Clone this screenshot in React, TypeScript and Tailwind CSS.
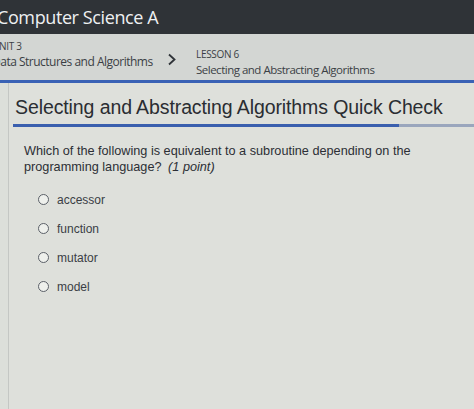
export default function App() {
  const options = ["accessor", "function", "mutator", "model"];

  return (
    <div className="w-[474px] h-[409px] overflow-hidden bg-[#dcdfda] flex flex-col">
      {/* Course header */}
      <div className="h-[34px] shrink-0 bg-[#2f3337] flex items-center">
        <h1 className="-ml-[3px] text-[18px] leading-none text-[#eef0f2] font-['Open_Sans',sans-serif] tracking-[-0.4px]">
          Computer Science A
        </h1>
      </div>

      {/* Breadcrumb */}
      <div className="h-[46px] shrink-0 bg-[#d3d6d3] flex items-start font-['Open_Sans',sans-serif] text-[#3b3f45]">
        <div className="-ml-[8px] pt-[5px] w-[173px] flex flex-col">
          <span className="text-[10px] leading-[14px] tracking-[-0.3px]">UNIT 3</span>
          <span className="text-[12px] leading-[18px] tracking-[-0.5px]">Data Structures and Algorithms</span>
        </div>
        <svg className="mt-[19px] ml-[2px]" width="10" height="13" viewBox="0 0 10 13" fill="none">
          <path d="M2 1.5 L7.5 6.5 L2 11.5" stroke="#2f3338" strokeWidth="1.8" />
        </svg>
        <div className="ml-[19px] pt-[13px] flex flex-col">
          <span className="text-[10px] leading-[14px] tracking-[-0.3px]">LESSON 6</span>
          <span className="text-[11.5px] leading-[18px] tracking-[-0.5px]">Selecting and Abstracting Algorithms</span>
        </div>
      </div>
      <div className="h-[3px] shrink-0 bg-[#3a62b5]" />

      {/* Quick check panel */}
      <div className="flex-1 ml-[8px] border-l border-[#c4c7c4] bg-[#dee0db] font-['Liberation_Sans',Arial,sans-serif]">
        <h2 className="pl-[6px] pt-[12px] text-[19.5px] leading-[24px] text-[#2a2d32] tracking-[-0.1px]">
          Selecting and Abstracting Algorithms Quick Check
        </h2>
        <div className="mt-[5px] ml-[4px] flex h-[3px]">
          <div className="w-[386px] bg-[#3a5fae]" />
          <div className="flex-1 bg-[#9aa6bd]" />
        </div>

        <p className="mt-[16px] pl-[15px] pr-[40px] text-[12.7px] leading-[16px] text-[#2c2f35]">
          Which of the following is equivalent to a subroutine depending on the programming language?{" "}
          <em className="ml-[3px]">(1 point)</em>
        </p>

        <div className="mt-[16px] pl-[29px] flex flex-col gap-[12px]">
          {options.map((o) => (
            <label key={o} className="flex items-center gap-[8px] h-[17px] text-[12px] text-[#3a3e45]">
              <span className="w-[11px] h-[11px] rounded-full border-[1.5px] border-[#5b6068] bg-[#eef0ec]" />
              {o}
            </label>
          ))}
        </div>
      </div>
    </div>
  );
}
